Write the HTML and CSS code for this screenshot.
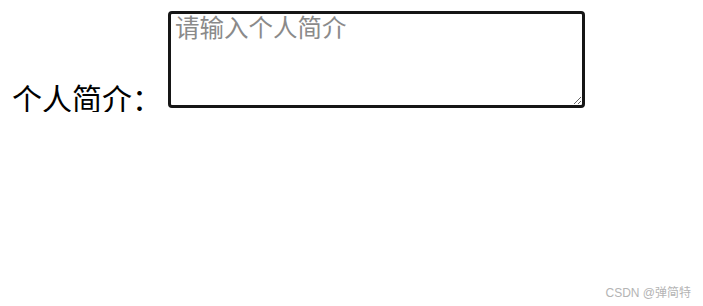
FILE: index.html
```html
<!DOCTYPE html>
<html>
<head>
    <meta charset="UTF-8">
    <title>个人简介</title>
    <link rel="stylesheet" href="styles.css">
</head>
<body>
<form action="?">
    <div class="row">
        <label for="intro" class="intro-label">个人简介：</label><textarea id="intro" name="intro" class="intro-box" placeholder="请输入个人简介" autofocus></textarea>
    </div>
</form>
<div class="mark">CSDN @弹简特</div>
</body>
</html>
```

FILE: styles.css
```css
/* 页面 */
body {
    margin: 8px;
    font-family: "Noto Sans CJK SC", sans-serif;
}

/* 一行：标签 + 文本框 */
.row {
    padding: 3px 0 0 4px;
    font-size: 30px;
    line-height: 1;
}
.intro-label {
    margin-right: 6px;
}
.intro-box {
    box-sizing: border-box;
    vertical-align: 2px;
    width: 417px;
    height: 97px;
    margin: 0;
    border: 3px solid #161616;
    border-radius: 4px;
    padding: 0 3px 0 4px;
    font-family: "Noto Sans CJK SC", sans-serif;
    font-size: 24.5px;
    line-height: 1.1;
    color: #000;
    caret-color: #000;
    outline: none;
}
.intro-box::placeholder {
    color: #8a8a8a;
}

/* 水印 */
.mark {
    position: absolute;
    right: 12px;
    bottom: 6px;
    font-family: "Liberation Sans", "Noto Sans CJK SC", sans-serif;
    font-size: 12px;
    color: #b4b4b4;
}
```
